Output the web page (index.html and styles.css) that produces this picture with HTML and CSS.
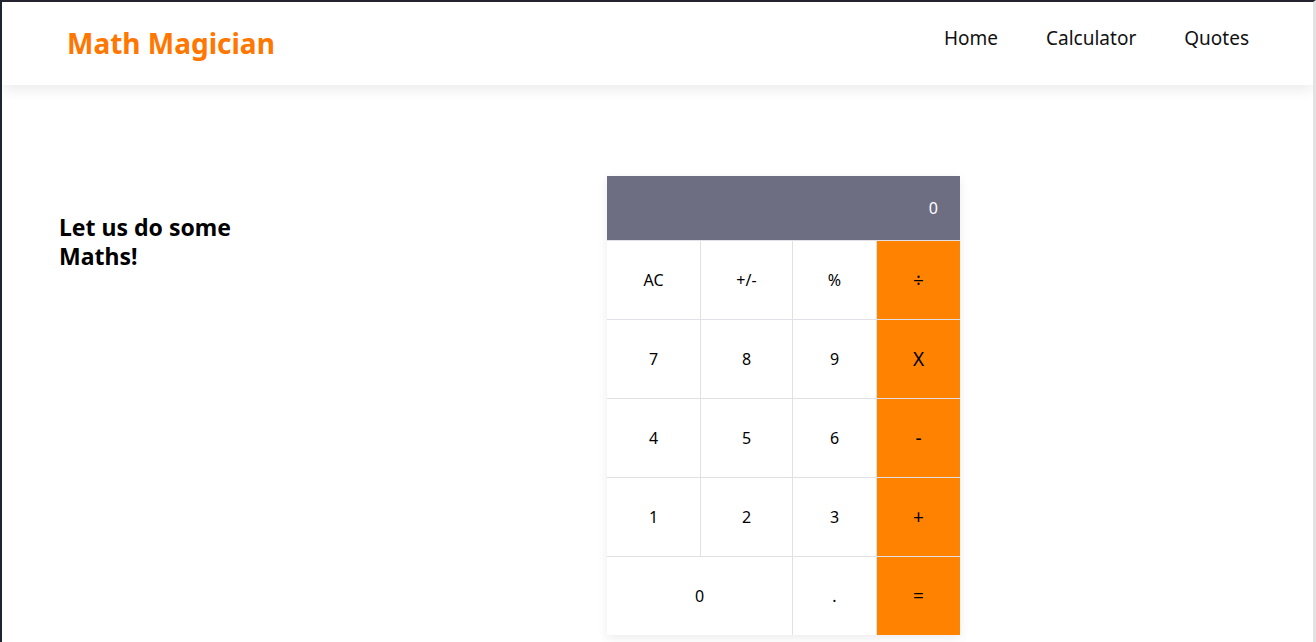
FILE: index.html
```html
<!DOCTYPE html>
<html lang="en">
  <head>
    <meta charset="UTF-8" />
    <title>Math Magician</title>
    <link rel="stylesheet" href="styles.css">
  </head>
  <body>
    <header>
      <div class="logo">Math Magician</div>
      <nav>
        <a href="#">Home</a>
        <a href="#">Calculator</a>
        <a href="#">Quotes</a>
      </nav>
    </header>
    <main>
      <h2 class="intro">Let us do some Maths!</h2>
      <div class="calculator">
        <div class="screen">0</div>
        <button>AC</button>
        <button>+/-</button>
        <button>%</button>
        <button class="op">÷</button>
        <button>7</button>
        <button>8</button>
        <button>9</button>
        <button class="op">X</button>
        <button>4</button>
        <button>5</button>
        <button>6</button>
        <button class="op">-</button>
        <button>1</button>
        <button>2</button>
        <button>3</button>
        <button class="op">+</button>
        <button class="zero">0</button>
        <button>.</button>
        <button class="op">=</button>
      </div>
    </main>
  </body>
</html>
```

FILE: styles.css
```css
html {
  background: #1d2430;
}
body {
  margin: 0;
  height: 640px;
  overflow: hidden;
  font-family: "Noto Sans", "Open Sans", sans-serif;
  background: #fff;
  color: #000;
  border-top: 2px solid #25232f;
  border-left: 2px solid #1b2631;
  border-right: 3px solid #e2e2e2;
}
header {
  height: 83px;
  padding: 0 64px 0 65px;
  display: flex;
  justify-content: space-between;
  align-items: center;
  background: #fff;
  box-shadow: 0 4px 14px rgba(0, 0, 0, 0.09);
  position: relative;
}
.logo {
  color: #ff7700;
  font-size: 28px;
  font-weight: 700;
  padding-bottom: 2px;
}
nav {
  display: flex;
  gap: 48px;
  padding-bottom: 11px;
}
nav a {
  color: #111;
  text-decoration: none;
  font-size: 19px;
}
main {
  display: flex;
  align-items: flex-start;
  padding: 91px 0 0 57px;
}
.intro {
  width: 200px;
  margin: 37px 348px 0 0;
  font-size: 23px;
  line-height: 29px;
  font-weight: 700;
}
.calculator {
  display: grid;
  grid-template-columns: 93px 91px 83px 83px;
  grid-template-rows: 64px repeat(5, 78px);
  background: #e0e0e6;
  gap: 1px;
  box-shadow: 0 3px 10px rgba(0, 0, 0, 0.08);
}
.screen {
  grid-column: 1 / -1;
  background: #6d6e82;
  color: #fff;
  font-size: 16px;
  display: flex;
  align-items: center;
  justify-content: flex-end;
  padding-right: 22px;
}
.calculator button {
  border: none;
  background: #fff;
  font-family: "Noto Sans", sans-serif;
  font-size: 16px;
  color: #000;
  cursor: pointer;
}
.calculator .op {
  background: #ff8300;
  font-size: 19px;
}
.calculator .zero {
  grid-column: span 2;
}
```
